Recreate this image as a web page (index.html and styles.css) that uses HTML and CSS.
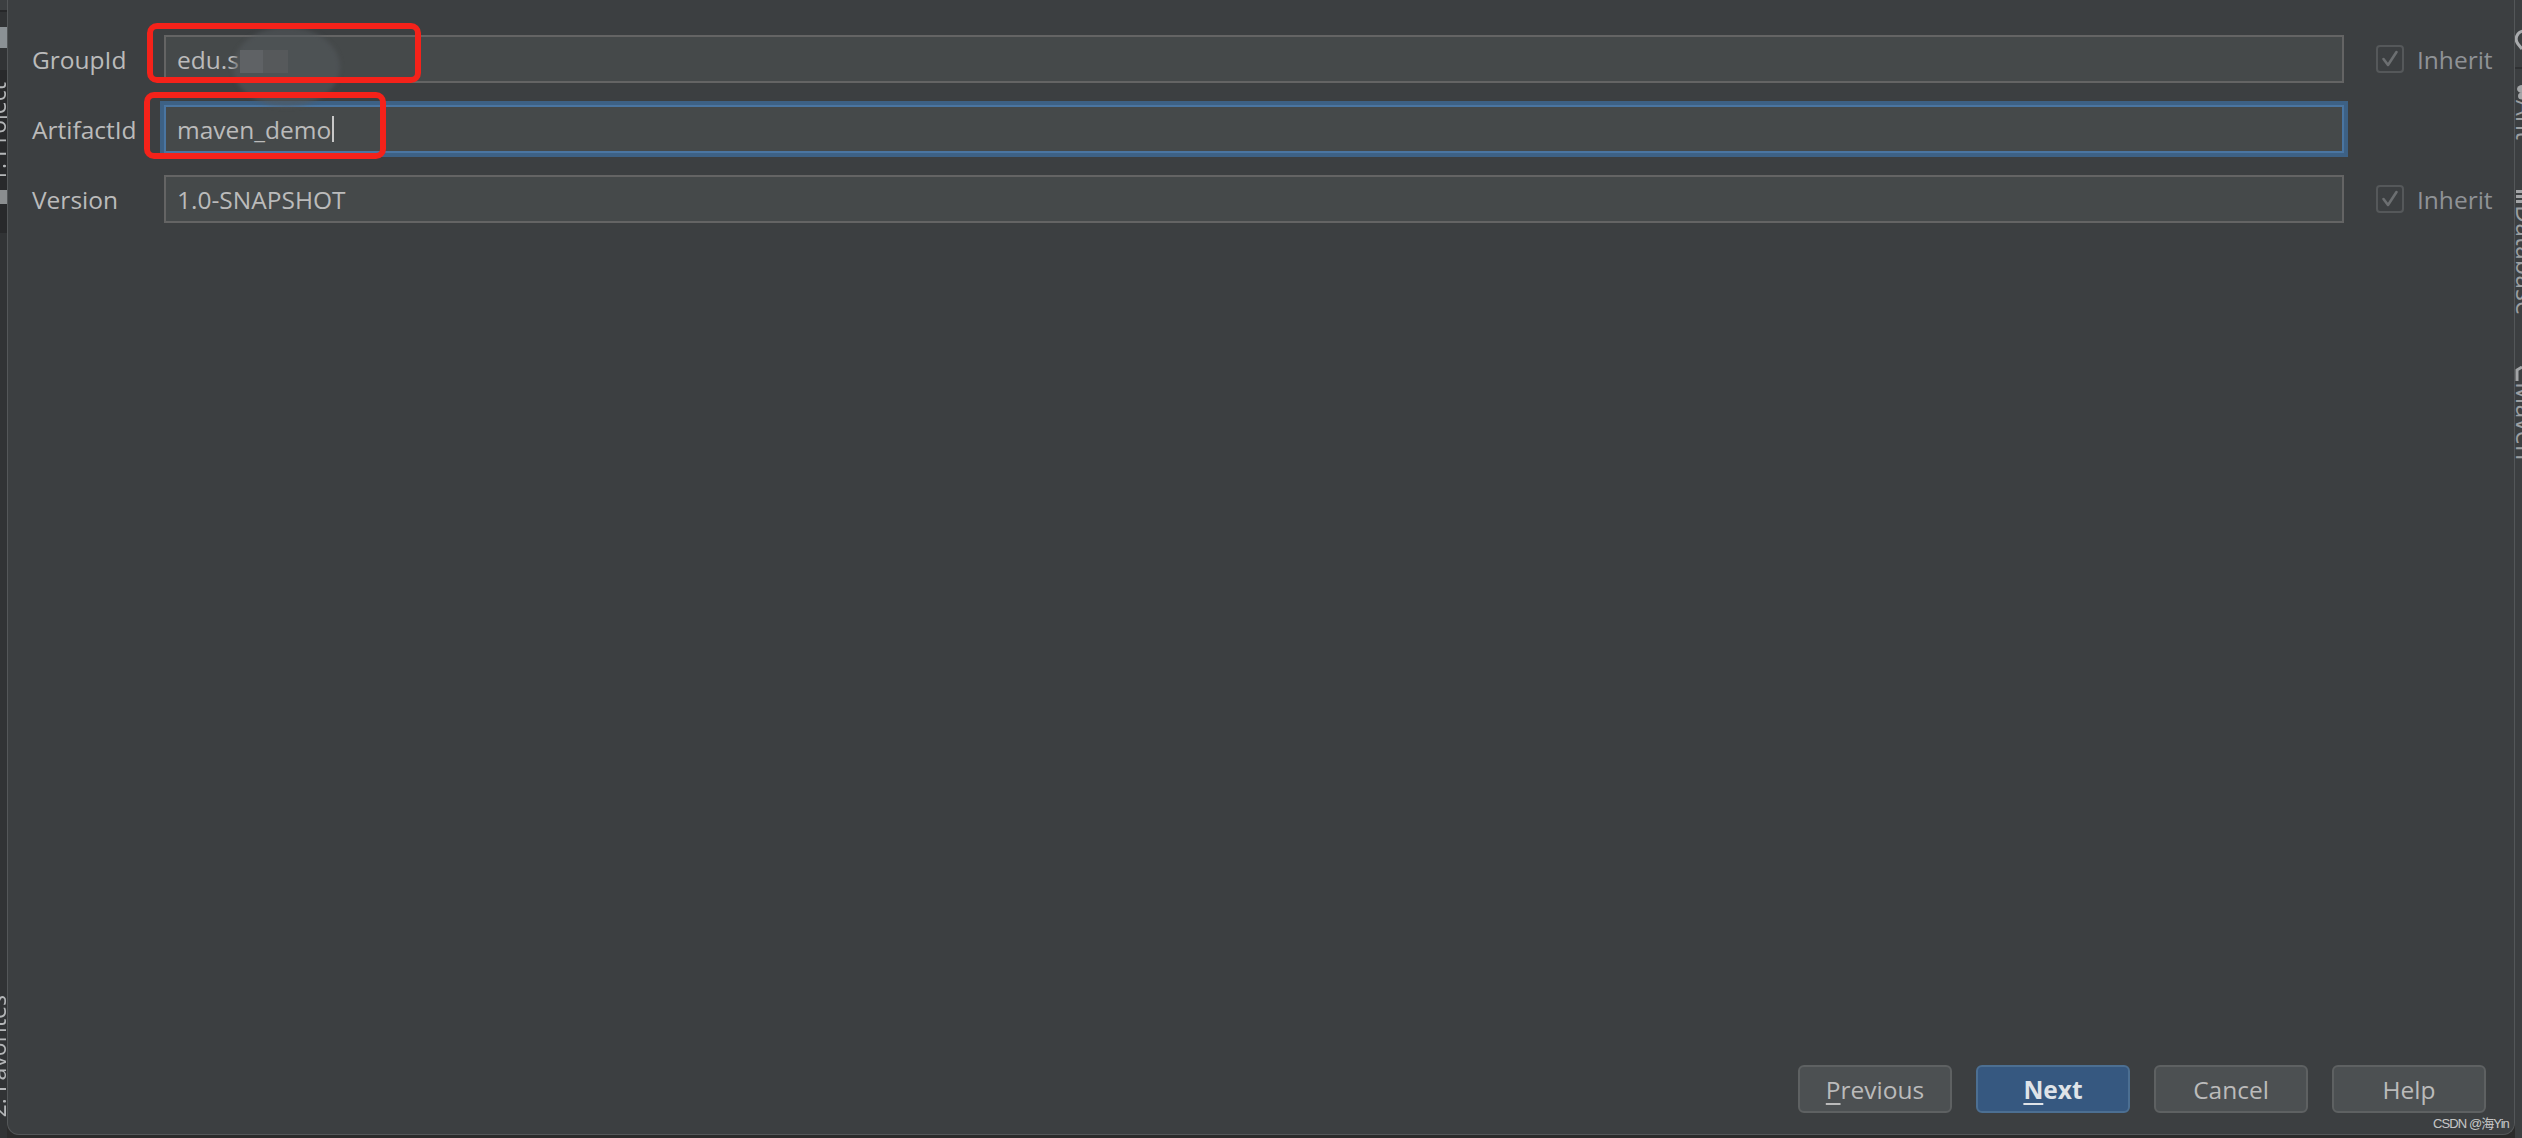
FILE: index.html
```html
<!DOCTYPE html>
<html lang="en">
<head>
<meta charset="utf-8">
<title>New Project</title>
<link rel="stylesheet" href="styles.css">
</head>
<body>
<div class="app">
  <aside class="lstrip">
    <div class="ls-top"></div>
    <div class="ls-sep"></div>
    <div class="ls-gap"></div>
    <div class="ls-icon"></div>
    <div class="ls-gap2"></div>
    <div class="ls-tab">
      <span class="vt-up">1: Project</span>
      <div class="ls-icon2"></div>
    </div>
    <div class="ls-fill"></div>
    <div class="ls-fav"><span class="vt-up">2: Favorites</span></div>
  </aside>

  <main class="dialog">
    <div class="form">
      <div class="lbl">GroupId</div>
      <div class="field">edu.s</div>
      <div class="inherit">
        <span class="cb"><svg viewBox="2 2 24 24" width="24" height="24"><path d="M7.5 14 L12 20 L20.5 7" fill="none" stroke="#6c6f71" stroke-width="2.6" stroke-linecap="round" stroke-linejoin="round"/></svg></span>
        <span>Inherit</span>
      </div>

      <div class="lbl">ArtifactId</div>
      <div class="field focused">maven_demo<span class="caret"></span></div>
      <div></div>

      <div class="lbl">Version</div>
      <div class="field">1.0-SNAPSHOT</div>
      <div class="inherit">
        <span class="cb"><svg viewBox="2 2 24 24" width="24" height="24"><path d="M7.5 14 L12 20 L20.5 7" fill="none" stroke="#6c6f71" stroke-width="2.6" stroke-linecap="round" stroke-linejoin="round"/></svg></span>
        <span>Inherit</span>
      </div>
    </div>

    <div class="buttons">
      <div class="btn"><u>P</u>revious</div>
      <div class="btn primary"><u>N</u>ext</div>
      <div class="btn">Cancel</div>
      <div class="btn">Help</div>
    </div>
  </main>

  <aside class="rstrip">
    <svg class="rs-search" width="7" height="22" viewBox="0 0 7 22"><path d="M9 3 A8 8 0 0 0 3 16 L7 21" fill="none" stroke="#a9abad" stroke-width="3"/></svg>
    <div class="rs-sep"></div>
    <div class="rs-tab t-ant">
      <svg class="rs-ico" width="7" height="16" viewBox="0 0 7 16"><ellipse cx="7" cy="5" rx="5" ry="4" fill="#a3a5a7"/><ellipse cx="7" cy="12" rx="4" ry="3.5" fill="#a3a5a7"/></svg>
      <span class="vt-down">Ant</span>
    </div>
    <div class="rs-tab t-db">
      <svg class="rs-ico" width="7" height="16" viewBox="0 0 7 16"><rect x="1" y="1" width="7" height="3" fill="#a3a5a7"/><rect x="1" y="6" width="7" height="3" fill="#a3a5a7"/><rect x="1" y="11" width="7" height="3" fill="#a3a5a7"/></svg>
      <span class="vt-down">Database</span>
    </div>
    <div class="rs-tab t-mvn">
      <svg class="rs-ico" width="7" height="16" viewBox="0 0 7 16"><path d="M2 15 L2 4 L7 1" fill="none" stroke="#a3a5a7" stroke-width="3"/></svg>
      <span class="vt-down">Maven</span>
    </div>
  </aside>
</div>

<div class="blob"></div>
<div class="blob-rect"></div>
<div class="mark m1"></div>
<div class="mark m2"></div>
<div class="watermark">CSDN @海Yin</div>
</body>
</html>
```

FILE: styles.css
```css
html, body {
  margin: 0;
  padding: 0;
}

body {
  width: 2522px;
  height: 1138px;
  overflow: hidden;
  position: relative;
  background: #2b2b2b;
  font-family: "Open Sans", "Noto Sans", "Noto Sans CJK SC", sans-serif;
  color: #bbbbbb;
}

.app {
  display: flex;
  align-items: flex-start;
  height: 1138px;
}

/* ---------- left tool stripe ---------- */
.lstrip {
  width: 7px;
  height: 1138px;
  flex: none;
  background: #313335;
  display: flex;
  flex-direction: column;
  overflow: hidden;
}
.ls-top { height: 10px; background: #3c3f41; flex: none; }
.ls-sep { height: 2px; background: #262729; flex: none; }
.ls-gap { height: 15px; flex: none; }
.ls-icon { height: 21px; background: #8b9195; flex: none; }
.ls-gap2 { height: 22px; flex: none; }
.ls-tab {
  height: 163px;
  flex: none;
  background: #28292b;
  display: flex;
  flex-direction: column;
  align-items: flex-start;
  padding-top: 12px;
  box-sizing: border-box;
}
.ls-icon2 {
  width: 7px;
  height: 14px;
  margin-top: 8px;
  background: #8b8e90;
  flex: none;
}
.ls-fill { flex: 1; }
.ls-fav {
  flex: none;
  padding-bottom: 21px;
  display: flex;
  flex-direction: column;
  align-items: flex-start;
}

.vt-up {
  writing-mode: vertical-rl;
  transform: rotate(180deg);
  font-size: 23px;
  line-height: 30px;
  width: 30px;
  margin-left: -18px;
  color: #b4b6b8;
  white-space: nowrap;
  flex: none;
}

/* ---------- dialog ---------- */
.dialog {
  width: 2508px;
  height: 1135px;
  flex: none;
  box-sizing: border-box;
  background: #3c3f41;
  border: 1px solid #545759;
  border-top: none;
  border-radius: 0 0 12px 12px;
  display: flex;
  flex-direction: column;
  padding: 35px 23px 21px 24px;
}

.form {
  display: grid;
  grid-template-columns: 132px 1fr 147px;
  grid-auto-rows: 48px;
  row-gap: 22px;
  align-items: center;
}

.lbl {
  font-size: 24.5px;
  color: #bbbbbb;
  white-space: nowrap;
}

.field {
  height: 48px;
  box-sizing: border-box;
  border: 2px solid #646464;
  background: #45494a;
  padding: 0 11px;
  font-size: 24.5px;
  color: #bbbbbb;
  display: flex;
  align-items: center;
  white-space: nowrap;
}
.field.focused {
  border-color: #4a75a1;
  box-shadow: 0 0 0 4px #3d6185;
}
.caret {
  display: inline-block;
  width: 2px;
  height: 26px;
  background: #c8c8c8;
  margin-left: 1px;
}

.inherit {
  display: flex;
  align-items: center;
  gap: 13px;
  padding-left: 32px;
  font-size: 24.5px;
  color: #8f9296;
}
.cb {
  width: 28px;
  height: 28px;
  box-sizing: border-box;
  border: 2px solid #55585a;
  border-radius: 4px;
  display: flex;
  flex: none;
}
.cb svg { display: block; }

/* ---------- buttons ---------- */
.buttons {
  margin-top: auto;
  display: flex;
  justify-content: flex-end;
  gap: 24px;
  padding-right: 5px;
}
.btn {
  width: 154px;
  height: 48px;
  box-sizing: border-box;
  border: 2px solid #5e6162;
  border-radius: 6px;
  background: #4c5052;
  color: #bbbbbb;
  font-size: 24.5px;
  display: flex;
  align-items: center;
  justify-content: center;
}
.btn u { text-underline-offset: 4px; text-decoration-thickness: 2px; }
.btn.primary {
  background: #365880;
  border-color: #4c6f92;
  color: #dfe3e8;
  font-weight: 700;
}

/* ---------- right tool stripe ---------- */
.rstrip {
  width: 7px;
  height: 1138px;
  flex: none;
  background: #3c3f41;
  display: flex;
  flex-direction: column;
  overflow: hidden;
}
.rs-search { margin-top: 28px; flex: none; display: block; }
.rs-sep { height: 2px; background: #2f3133; margin-top: 17px; flex: none; }
.rs-tab {
  flex: none;
  display: flex;
  flex-direction: column;
  align-items: flex-start;
}
.rs-ico { display: block; flex: none; }
.t-ant { margin-top: 15px; height: 100px; }
.t-db { margin-top: 5px; height: 165px; }
.t-mvn { margin-top: 12px; height: 120px; }
.vt-down {
  writing-mode: vertical-rl;
  font-size: 25px;
  line-height: 30px;
  width: 30px;
  margin-left: -4px;
  color: #9c9fa2;
  white-space: nowrap;
  flex: none;
}

/* ---------- overlays (annotation & privacy blur) ---------- */
.blob {
  position: absolute;
  left: 233px;
  top: 27px;
  width: 107px;
  height: 80px;
  border-radius: 50%;
  background: rgba(84, 89, 92, 0.55);
  filter: blur(2px);
}
.blob-rect {
  position: absolute;
  left: 240px;
  top: 50px;
  width: 48px;
  height: 23px;
  background: linear-gradient(90deg, #5f6265 0 47%, #56595b 47% 100%);
}
.mark {
  position: absolute;
  box-sizing: border-box;
  border: 6px solid #f5221a;
  border-radius: 10px;
}
.m1 { left: 147px; top: 23px; width: 274px; height: 60px; }
.m2 { left: 144px; top: 92px; width: 242px; height: 67px; }

.watermark {
  position: absolute;
  left: 2433px;
  top: 1113px;
  font-family: "Liberation Sans", "Noto Sans CJK SC", sans-serif;
  font-size: 13px;
  letter-spacing: -0.9px;
  color: rgba(235, 235, 235, 0.8);
  white-space: nowrap;
}
```
